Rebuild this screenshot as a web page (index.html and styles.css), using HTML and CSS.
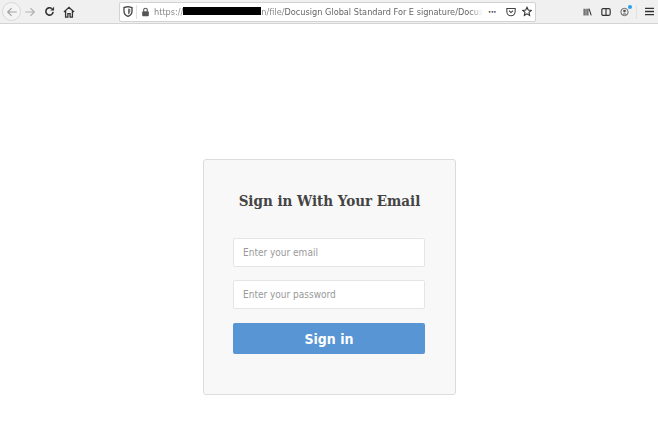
FILE: index.html
```html
<!DOCTYPE html>
<html>
  <head>
    <meta charset="utf-8">
    <title>Sign in</title>
    <link rel="stylesheet" href="styles.css">
  </head>
  <body>
    <div class="toolbar">
      <div class="nav-buttons">
        <span class="back-button">
          <svg width="12" height="12" viewBox="0 0 14 14"><path d="M12.500 7H2M6.500 2.500L2 7l4.500 4.500" fill="none" stroke="#a0a0a0" stroke-width="1.400"/></svg>
        </span>
        <svg class="forward" width="12" height="12" viewBox="0 0 14 14"><path d="M1.500 7H12M7.500 2.500L12 7l-4.500 4.500" fill="none" stroke="#b0b0b0" stroke-width="1.400"/></svg>
        <svg class="reload" width="11" height="11" viewBox="0 0 12 12"><path d="M10 6.500A4 4 0 1 1 8.500 2.800" fill="none" stroke="#333" stroke-width="1.700"/><path d="M11 0.800V5H6.800z" fill="#333"/></svg>
        <svg class="home" width="12" height="12" viewBox="0 0 13 13"><path d="M1 6.500L6.500 1.500 12 6.500M2.800 5.500V12H5.300V8.300H7.700V12H10.200V5.500" fill="none" stroke="#333" stroke-width="1.400"/></svg>
      </div>
      <div class="url-bar">
        <svg class="shield" width="10" height="11" viewBox="0 0 10 11"><path d="M1 1.500L5 .7 9 1.500V5.500C9 8 7 9.500 5 10.300 3 9.500 1 8 1 5.500z" fill="none" stroke="#444" stroke-width="1.300"/><path d="M5 2.500L7.300 3V5.500C7.300 7 6 8 5 8.500z" fill="#777"/></svg>
        <span class="url-divider"></span>
        <svg class="lock" width="9" height="10" viewBox="0 0 10 11"><path d="M3 5V3.300a2 2 0 0 1 4 0V5" fill="none" stroke="#555" stroke-width="1.200"/><rect x="1.300" y="4.800" width="7.400" height="5.400" rx="1" fill="#555"/></svg>
        <span class="url-text"><span class="url-muted">https://</span><span class="redacted"></span><span class="url-muted">n/file/</span>Docusign Global Standard For E signature/Docus</span>
        <span class="dots">•••</span>
        <svg class="pocket" width="10" height="10" viewBox="0 0 12 11"><path d="M1 1.200H11V5A5 5 0 0 1 1 5z" fill="none" stroke="#444" stroke-width="1.300"/><path d="M3.700 4L6 6.200 8.300 4" fill="none" stroke="#444" stroke-width="1.300"/></svg>
        <svg class="star" width="10" height="11" viewBox="0 0 12 12"><path d="M6 1L7.500 4.300 11 4.700 8.400 7 9.200 10.700 6 8.800 2.800 10.700 3.600 7 1 4.700 4.500 4.300z" fill="none" stroke="#333" stroke-width="1.300"/></svg>
      </div>
      <div class="tool-buttons">
        <svg width="9" height="10" viewBox="0 0 12 11"><path d="M1.500 1V10M4 1V10M6.500 1V10M8 1L11 10" fill="none" stroke="#333" stroke-width="1.400"/></svg>
        <svg width="10" height="10" viewBox="0 0 12 11"><rect x="1" y="1.500" width="10" height="8" rx="1.500" fill="none" stroke="#333" stroke-width="1.400"/><path d="M6 2V9" stroke="#333" stroke-width="1.400"/></svg>
        <span class="account">
          <svg width="9" height="10" viewBox="0 0 11 11"><circle cx="5.500" cy="5.500" r="4.500" fill="none" stroke="#666" stroke-width="1.200"/><circle cx="5.500" cy="4.300" r="1.700" fill="#555"/><path d="M2.500 8.500C3.500 6.800 7.500 6.800 8.500 8.500z" fill="#555"/></svg>
          <span class="account-dot"></span>
        </span>
        <span class="tool-divider"></span>
        <svg width="9" height="9" viewBox="0 0 10 10"><path d="M0 1.500H10M0 5H10M0 8.500H10" stroke="#333" stroke-width="1.400"/></svg>
      </div>
    </div>
    <div class="page">
      <form class="login-card">
        <h1>Sign in With Your Email</h1>
        <input class="field" type="text" placeholder="Enter your email">
        <input class="field" type="password" placeholder="Enter your password">
        <button class="submit" type="button">Sign in</button>
      </form>
    </div>
  </body>
</html>
```

FILE: styles.css
```css
* {
  box-sizing: border-box;
}
body {
  margin: 0;
  height: 429px;
  overflow: hidden;
  background: #fff;
  font-family: "DejaVu Sans", sans-serif;
  font-stretch: condensed;
}
.toolbar {
  display: flex;
  align-items: center;
  height: 24px;
  background: #f0f0f0;
  border-bottom: 1px solid #d4d4d4;
}
.toolbar > * {
  flex-shrink: 0;
}
.toolbar svg {
  flex-shrink: 0;
}
.nav-buttons {
  display: flex;
  align-items: center;
  width: 119px;
  padding-left: 2px;
}
.back-button {
  display: flex;
  align-items: center;
  justify-content: center;
  width: 19px;
  height: 19px;
  border: 1px solid #d8d8d8;
  border-radius: 50%;
  background: #f4f4f4;
}
.forward {
  margin-left: 3px;
}
.reload {
  margin-left: 8px;
}
.home {
  margin-left: 8px;
}
.url-bar {
  display: flex;
  align-items: center;
  width: 417px;
  height: 20px;
  padding-left: 3px;
  background: #fff;
  border: 1px solid #d2d2d2;
  border-radius: 2px;
}
.url-divider {
  width: 1px;
  height: 14px;
  margin: 0 4px 0 3px;
  background: #e0e0e0;
}
.url-text {
  flex-shrink: 0;
  width: 329px;
  margin-left: 4px;
  overflow: hidden;
  white-space: nowrap;
  font-size: 9.100px;
  line-height: 12px;
  color: #666;
  -webkit-mask-image: linear-gradient(to right, #000 96%, transparent);
}
.url-muted {
  color: #888;
}
.redacted {
  display: inline-block;
  width: 78px;
  height: 8px;
  background: #000;
}
.dots {
  flex-shrink: 0;
  width: 12px;
  margin-left: 5px;
  font-size: 6px;
  letter-spacing: -0.500px;
  color: #333;
}
.pocket {
  margin-left: 6px;
}
.star {
  margin-left: 6px;
}
.tool-buttons {
  display: flex;
  align-items: center;
  gap: 9px;
  margin-left: 47px;
}
.account {
  position: relative;
  display: flex;
}
.account-dot {
  position: absolute;
  top: -2px;
  right: -3px;
  width: 4px;
  height: 4px;
  border-radius: 50%;
  background: #2a9fe8;
}
.tool-divider {
  width: 1px;
  height: 14px;
  margin: 0 -1px 0 -2px;
  background: #e2e2e2;
}
.page {
  display: flex;
  justify-content: center;
  padding: 135px 0 0 1px;
}
.login-card {
  display: flex;
  flex-direction: column;
  width: 253px;
  height: 236px;
  padding: 0 29px;
  background: #f8f8f8;
  border: 1px solid #dcdcdc;
  border-radius: 3px;
}
h1 {
  margin: 32px 0 28px;
  font-family: "DejaVu Serif", serif;
  font-size: 15px;
  line-height: 18px;
  font-weight: bold;
  text-align: center;
  white-space: nowrap;
  color: #444;
}
.field {
  width: 192px;
  height: 29px;
  margin-bottom: 13px;
  padding: 0 9px;
  background: #fff;
  border: 1px solid #e5e5e5;
  border-radius: 2px;
  font-family: "DejaVu Sans", sans-serif;
  font-stretch: condensed;
  font-size: 10px;
}
.field::placeholder {
  color: #999;
  opacity: 1;
}
.submit {
  width: 192px;
  height: 31px;
  margin-top: 1px;
  padding: 0;
  background: #5795d4;
  border: none;
  border-radius: 2px;
  font-family: "DejaVu Sans", sans-serif;
  font-stretch: condensed;
  font-size: 14px;
  font-weight: bold;
  color: #fff;
}
```
